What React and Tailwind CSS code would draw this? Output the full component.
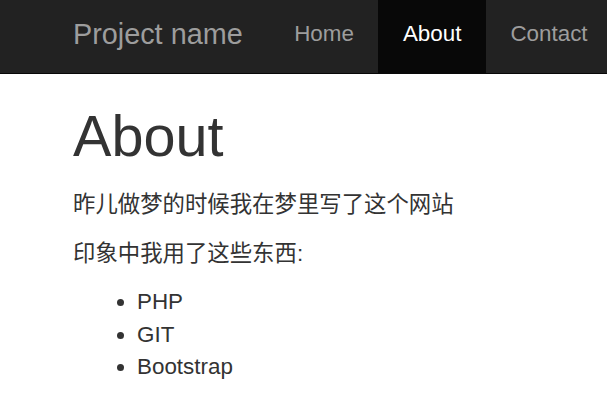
import React from 'react';

const links = [
  { label: 'Home', active: false },
  { label: 'About', active: true },
  { label: 'Contact', active: false },
];

const App = () => {
  return (
    <div className="min-h-screen bg-white text-[#333] font-['Liberation_Sans','Noto_Sans_CJK_SC',sans-serif] overflow-hidden">
      <nav className="h-[74px] bg-[#222] border-b border-[#080808] flex pl-[49px] whitespace-nowrap">
        <a href="#" className="block px-[24px] pt-[18px] text-[28.8px] leading-[32px] text-[#9d9d9d]">
          Project name
        </a>
        <ul className="flex ml-[3px]">
          {links.map((link) => (
            <li key={link.label}>
              <a
                href="#"
                className={
                  link.active
                    ? 'block h-full px-[24.5px] pt-[18px] text-[22.4px] leading-[32px] bg-[#080808] text-white'
                    : 'block h-full px-[24.5px] pt-[18px] text-[22.4px] leading-[32px] text-[#9d9d9d]'
                }
              >
                {link.label}
              </a>
            </li>
          ))}
        </ul>
      </nav>

      <div className="px-[73px]">
        <h1 className="mt-[31px] mb-[21px] text-[57.6px] leading-[63.4px] font-normal">About</h1>
        <p className="mb-[17px] text-[22.4px] leading-[32px]">昨儿做梦的时候我在梦里写了这个网站</p>
        <p className="mb-[16px] text-[22.4px] leading-[32px]">印象中我用了这些东西:</p>
        <ul className="list-disc pl-[64px] text-[22.4px] leading-[32.5px]">
          <li>PHP</li>
          <li>GIT</li>
          <li>Bootstrap</li>
        </ul>
      </div>
    </div>
  );
};

export default App;
